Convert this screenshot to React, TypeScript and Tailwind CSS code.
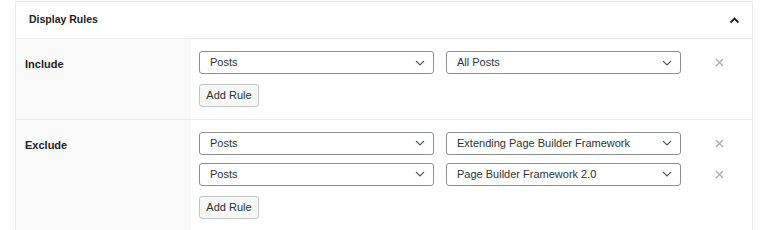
const font = { fontFamily: '"Liberation Sans", Arial, sans-serif' };

function Chevron() {
    return (
        <svg width="10" height="6" viewBox="0 0 10 6" className="shrink-0">
            <path d="M1 1l4 4 4-4" fill="none" stroke="#50575e" strokeWidth="1.1" />
        </svg>
    );
}

function Select({ value }: { value: string }) {
    return (
        <div className="flex h-[23px] w-[235px] items-center justify-between rounded-[3px] border border-[#8c8f94] bg-white pl-[10px] pr-[8px] text-[11px] text-[#2c3338]">
            <span>{value}</span>
            <Chevron />
        </div>
    );
}

function RemoveIcon() {
    return (
        <div className="flex w-[52px] items-center justify-center">
            <svg width="9" height="9" viewBox="0 0 9 9">
                <path d="M1 1l7 7M8 1l-7 7" stroke="#a7aaad" strokeWidth="1.2" />
            </svg>
        </div>
    );
}

function AddRule() {
    return (
        <button className="h-[23px] w-[60px] rounded-[3px] border border-[#c3c4c7] bg-[#f6f7f7] text-[11px] text-[#2c3338]">
            Add Rule
        </button>
    );
}

function RuleRow({ label, rules }: { label: string; rules: string[][] }) {
    return (
        <div className="flex border-b border-[#ececec]">
            <div className="w-[175px] shrink-0 bg-[#f9f9f9] pl-[9px] pt-[17px] text-[11px] font-bold text-[#1d2327]">
                {label}
            </div>
            <div className="flex flex-col gap-2 pb-3 pl-2 pt-3">
                {rules.map((r, i) => (
                    <div key={i} className="flex items-center gap-3">
                        <Select value={r[0]} />
                        <Select value={r[1]} />
                        <RemoveIcon />
                    </div>
                ))}
                <div>
                    <AddRule />
                </div>
            </div>
        </div>
    );
}

export default function App() {
    return (
        <div className="h-[230px] w-[768px] bg-white pt-px" style={font}>
            <div className="mx-[15px] border-x border-t border-[#ececec]">
                <div className="flex h-[37px] items-center justify-between border-b border-[#ececec] pl-[13px] pr-[12px]">
                    <span className="text-[10.5px] font-bold text-[#1d2327]">Display Rules</span>
                    <svg width="11" height="7" viewBox="0 0 11 7">
                        <path d="M1.5 5.5l4-4 4 4" fill="none" stroke="#1d2327" strokeWidth="1.8" />
                    </svg>
                </div>
                <RuleRow label="Include" rules={[['Posts', 'All Posts']]} />
                <RuleRow
                    label="Exclude"
                    rules={[
                        ['Posts', 'Extending Page Builder Framework'],
                        ['Posts', 'Page Builder Framework 2.0'],
                    ]}
                />
            </div>
        </div>
    );
}
